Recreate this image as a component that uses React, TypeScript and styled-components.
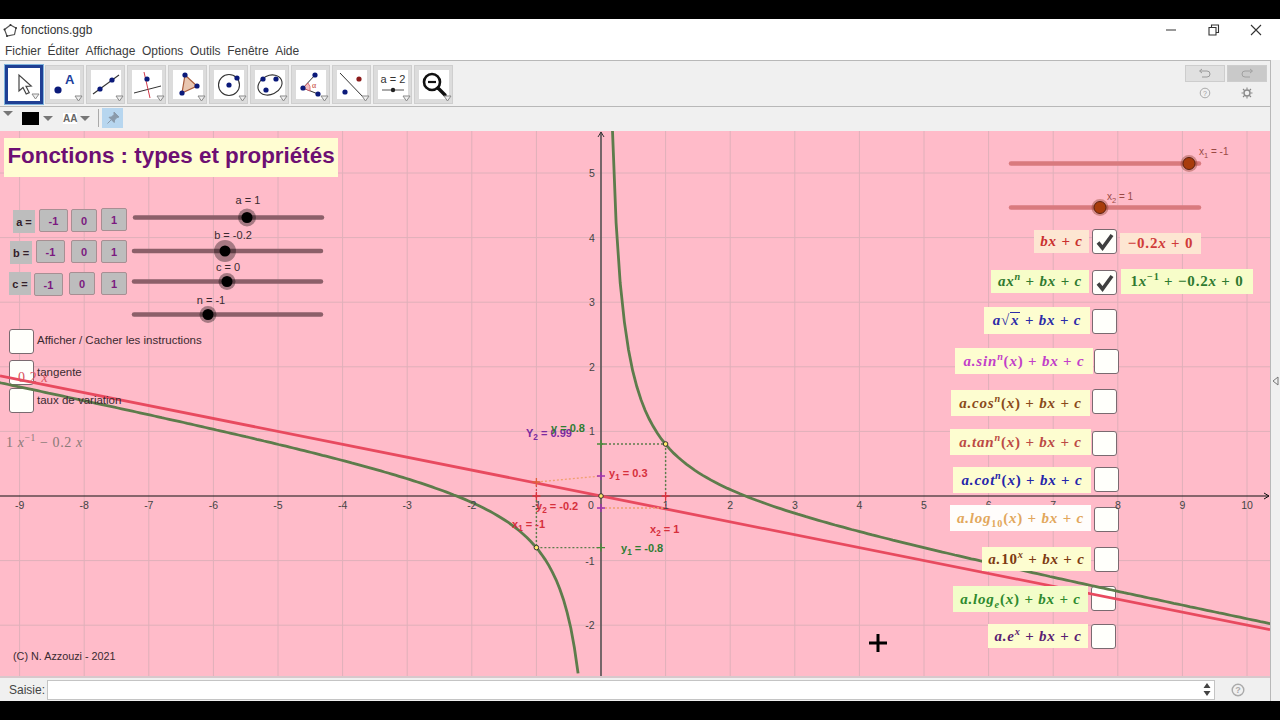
import React from "react";
import styled, { createGlobalStyle } from "styled-components";

const Global = createGlobalStyle`
  html, body { margin: 0; padding: 0; background: #000; }
  #root { width: 1280px; height: 720px; }
`;

const OX = 601;
const OY = 496;
const U = 64.6;
const TOP = 131;
const px = (x: number) => OX + x * U;
const py = (y: number) => OY - y * U;

const Page = styled.div`
  width: 1280px;
  height: 720px;
  overflow: hidden;
  display: flex;
  flex-direction: column;
  background: #000;
  font-family: "Liberation Sans", Arial, sans-serif;
`;
const BlackBar = styled.div`
  height: ${(p: { $h: number }) => p.$h}px;
  flex: none;
  background: #000;
`;
const TitleBar = styled.header`
  height: 22px;
  flex: none;
  background: #fff;
  display: flex;
  align-items: center;
  padding: 0 0 0 3px;
  gap: 3px;
  font-size: 12px;
  color: #333;
`;
const TitleText = styled.span`
  flex: 1;
  font-size: 12px;
`;
const WinButtons = styled.div`
  display: flex;
  align-items: center;
  gap: 28px;
  padding-right: 16px;
`;
const MenuBar = styled.nav`
  height: 19px;
  flex: none;
  background: #fff;
  display: flex;
  align-items: center;
  gap: 6.6px;
  padding-left: 5px;
  font-size: 12px;
  color: #3c3c3c;
`;
const Workspace = styled.div`
  flex: none;
  height: 641px;
  display: flex;
`;
const WorkColumn = styled.div`
  width: 1270px;
  flex: none;
  display: flex;
  flex-direction: column;
`;
const Toolbar = styled.div`
  height: 47px;
  flex: none;
  box-sizing: border-box;
  background: #f0f0f0;
  border-top: 1px solid #b8b8b8;
  border-bottom: 1px solid #b8b8b8;
  display: flex;
  align-items: flex-start;
  padding: 4px 0 0 5px;
  justify-content: space-between;
`;
const ToolGroup = styled.div`
  display: flex;
  gap: 2px;
`;
const ToolButton = styled.div<{ $active?: boolean }>`
  position: relative;
  width: ${(p) => (p.$active ? 38 : 39)}px;
  height: 39px;
  box-sizing: border-box;
  background: ${(p) => (p.$active ? "#fff" : "#dcdcdc")};
  border: ${(p) => (p.$active ? "3px solid #1f3f94" : "1px solid #cfcfcf")};
  outline: ${(p) => (p.$active ? "1px solid #7fb4dc" : "none")};
  display: flex;
  align-items: center;
  justify-content: center;
`;
const ToolFace = styled.div`
  width: 30px;
  height: 29px;
  background: #fff;
  display: flex;
  align-items: center;
  justify-content: center;
`;
const ToolCaret = styled.svg`
  position: absolute;
  right: 0;
  bottom: 1px;
`;
const UndoArea = styled.div`
  display: grid;
  grid-template-columns: 40px 40px;
  column-gap: 2px;
  row-gap: 5px;
  padding-right: 3px;
  justify-items: center;
`;
const UndoButton = styled.div<{ $dark?: boolean }>`
  width: 40px;
  height: 17px;
  box-sizing: border-box;
  background: ${(p) => (p.$dark ? "#c9c9c9" : "#e0e0e0")};
  border: 1px solid #cdcdcd;
  display: flex;
  align-items: center;
  justify-content: center;
`;
const StyleBar = styled.div`
  height: 24px;
  flex: none;
  box-sizing: border-box;
  background: #f0f0f0;
  display: flex;
  align-items: center;
  padding: 0 0 2px 3px;
`;
const Caret = styled.span<{ $ml: number; $up?: number }>`
  width: 0;
  height: 0;
  margin-left: ${(p) => p.$ml}px;
  margin-bottom: ${(p) => p.$up || 0}px;
  border-left: 5px solid transparent;
  border-right: 5px solid transparent;
  border-top: 5px solid #777;
`;
const Swatch = styled.span`
  width: 17px;
  height: 13px;
  margin-left: 9px;
  background: #000;
`;
const FontAA = styled.span`
  margin-left: 10px;
  font-size: 10px;
  font-weight: bold;
  background: #fff;
  color: #666;
  width: 14px;
`;
const Separator = styled.span`
  width: 1px;
  height: 18px;
  margin-left: 8px;
  background: #aaa;
`;
const PinButton = styled.span`
  width: 21px;
  height: 20px;
  margin-left: 3px;
  background: #b7d6ef;
  display: flex;
  align-items: center;
  justify-content: center;
`;
const Canvas = styled.section`
  position: relative;
  flex: none;
  height: 545px;
  background: #ffbbc9;
  overflow: hidden;
`;
const SideStrip = styled.aside`
  flex: 1;
  background: #f0f0f0;
  border-left: 1px solid #b8b8b8;
  display: flex;
  align-items: flex-start;
  padding-top: 316px;
  justify-content: center;
`;
const Plot = styled.svg<{ $z: number }>`
  position: absolute;
  left: 0;
  top: 0;
  z-index: ${(p) => p.$z};
`;
const Title = styled.h1`
  position: absolute;
  z-index: 3;
  left: 4px;
  top: 7px;
  width: 334px;
  height: 39px;
  margin: 0;
  background: #fffdd2;
  color: #6d0f73;
  font-size: 22.4px;
  font-weight: bold;
  line-height: 36px;
  text-align: center;
  white-space: nowrap;
`;
const Txt = styled.span<{ $x: number; $y: number; $c?: string; $s?: number; $b?: boolean; $mid?: boolean }>`
  position: absolute;
  z-index: 3;
  left: ${(p) => p.$x}px;
  top: ${(p) => p.$y - TOP}px;
  transform: translate(${(p) => (p.$mid ? "-50%" : "0")}, -50%);
  color: ${(p) => p.$c || "#3a2a30"};
  font-size: ${(p) => p.$s || 11.5}px;
  font-weight: ${(p) => (p.$b ? "bold" : "normal")};
  white-space: nowrap;
  line-height: 1;
  sub {
    font-size: 0.75em;
    line-height: 0;
  }
`;
const SerifTxt = styled(Txt)`
  font-family: "Liberation Serif", serif;
  font-size: 14px;
  letter-spacing: 0.6px;
  sup {
    font-size: 0.68em;
    line-height: 0;
  }
`;
const Check = styled.div<{ $x: number; $y: number }>`
  position: absolute;
  z-index: 1;
  left: ${(p) => p.$x}px;
  top: ${(p) => p.$y - TOP}px;
  width: 25px;
  height: 25px;
  box-sizing: border-box;
  border: 1.5px solid #7a6a70;
  border-radius: 3px;
  background: #fffffb;
  display: flex;
  align-items: center;
  justify-content: center;
`;
const GrayLabel = styled.div<{ $x: number; $y: number }>`
  position: absolute;
  z-index: 3;
  left: ${(p) => p.$x}px;
  top: ${(p) => p.$y - TOP}px;
  width: 22px;
  height: 23px;
  background: #bdbdbd;
  color: #33202a;
  font-size: 11px;
  font-weight: bold;
  display: flex;
  align-items: center;
  justify-content: center;
`;
const ValueButton = styled.div<{ $x: number; $y: number; $w: number }>`
  position: absolute;
  z-index: 3;
  left: ${(p) => p.$x}px;
  top: ${(p) => p.$y - TOP}px;
  width: ${(p) => p.$w}px;
  height: 23px;
  box-sizing: border-box;
  background: #bdbdbd;
  border: 1px solid #a78f93;
  border-radius: 2px;
  color: #7b1a80;
  font-size: 11px;
  font-weight: bold;
  display: flex;
  align-items: center;
  justify-content: center;
`;
const FormulaBox = styled.div<{ $l: number; $r: number; $t: number; $b: number; $bg: string; $c: string }>`
  position: absolute;
  z-index: 3;
  left: ${(p) => p.$l}px;
  top: ${(p) => p.$t - TOP}px;
  width: ${(p) => p.$r - p.$l}px;
  height: ${(p) => p.$b - p.$t}px;
  background: ${(p) => p.$bg};
  color: ${(p) => p.$c};
  font-family: "Liberation Serif", serif;
  font-weight: bold;
  font-size: 15px;
  letter-spacing: 0.8px;
  display: flex;
  align-items: center;
  justify-content: center;
  white-space: nowrap;
  i {
    font-style: italic;
  }
  sup, sub {
    font-size: 0.68em;
    line-height: 0;
  }
`;
const Radicand = styled.i`
  display: inline-block;
  border-top: 1.2px solid currentColor;
  line-height: 1;
  padding: 0 1px;
`;
const InputBar = styled.footer`
  flex: none;
  height: 25px;
  box-sizing: border-box;
  background: #f0f0f0;
  border-top: 2px solid #d8c8cc;
  display: flex;
  align-items: center;
  padding: 0 0 0 9px;
  font-size: 12px;
  color: #444;
`;
const InputField = styled.div`
  margin-left: 2px;
  width: 1168px;
  height: 20px;
  box-sizing: border-box;
  background: #fff;
  border: 1px solid #c4c4c4;
  display: flex;
  align-items: center;
  justify-content: flex-end;
  padding-right: 3px;
`;
const InputHelp = styled.span`
  margin-left: 16px;
  display: flex;
`;
const Cursor = styled.svg`
  position: absolute;
  z-index: 4;
  left: 868px;
  top: 502px;
`;

const Sq = ({ children }: { children: React.ReactNode }) => (
  <svg width="28" height="27" viewBox="0 0 28 27">{children}</svg>
);
const Dot = ({ x, y, r = 2.6, c = "#0b1a7a" }: { x: number; y: number; r?: number; c?: string }) => (
  <circle cx={x} cy={y} r={r} fill={c} />
);

const toolIcons: React.ReactNode[] = [
  <Sq><path d="M9 4v16l4-3.5 3.2 6.5 3-1.4-3.2-6.3 5.2-.3z" fill="#fff" stroke="#444" strokeWidth="1.2" /></Sq>,
  <Sq><Dot x={7} y={19} r={3.6} /><text x="14" y="13" fontFamily="Liberation Sans" fontWeight="bold" fontSize="13" fill="#1d3f9c">A</text></Sq>,
  <Sq><path d="M1 23L27 4" stroke="#333" strokeWidth="1.1" /><Dot x={8} y={18} /><Dot x={20} y={9} /></Sq>,
  <Sq><path d="M1 22L28 15" stroke="#333" strokeWidth="1" /><path d="M11 1l6 26" stroke="#d0394a" strokeWidth="1" /><Dot x={14} y={8} /></Sq>,
  <Sq><path d="M11 4L23 15 8 22z" fill="#e9c6b0" stroke="#a6593a" strokeWidth="1.2" /><Dot x={11} y={4} /><Dot x={23} y={15} /><Dot x={8} y={22} /></Sq>,
  <Sq><circle cx="14" cy="14" r="10.5" fill="none" stroke="#333" strokeWidth="1.1" /><Dot x={14} y={14} /><Dot x={22} y={7} /></Sq>,
  <Sq><ellipse cx="14" cy="14" rx="12.5" ry="9.5" transform="rotate(-25 14 14)" fill="none" stroke="#333" strokeWidth="1.1" /><Dot x={7} y={8} /><Dot x={20} y={8} /><Dot x={10} y={19} /></Sq>,
  <Sq><path d="M6 17L18 4M6 17L21 23" stroke="#333" strokeWidth="1" /><path d="M11 12q3 3 2 8l-7-3z" fill="#f2c0c0" stroke="#d0394a" strokeWidth=".6" /><text x="15" y="17" fontSize="8" fontFamily="Liberation Serif" fill="#c0392b">α</text><Dot x={6} y={17} /><Dot x={18} y={4} /><Dot x={21} y={23} /></Sq>,
  <Sq><path d="M2 2L26 27" stroke="#333" strokeWidth="1" /><Dot x={21} y={8} c="#8b1a1a" /><Dot x={7} y={21} /></Sq>,
  <Sq><text x="14" y="12" textAnchor="middle" fontFamily="Liberation Sans" fontSize="11" fill="#333">a = 2</text><path d="M3 19H25" stroke="#555" strokeWidth="1" /><circle cx="14" cy="19" r="2.2" fill="#222" /></Sq>,
  <Sq><circle cx="12" cy="11" r="8" fill="#fff" stroke="#111" strokeWidth="2.6" /><path d="M8 11h8" stroke="#111" strokeWidth="2.2" /><path d="M18 17l7 7" stroke="#111" strokeWidth="3.4" strokeLinecap="round" /></Sq>,
];

const curve = (from: number, to: number) => {
  const n = 160;
  const pts: string[] = [];
  for (let i = 0; i <= n; i++) {
    const x = from + ((to - from) * i) / n;
    const y = 1 / x - 0.2 * x;
    pts.push(`${px(x).toFixed(1)},${py(y).toFixed(1)}`);
  }
  return `M${pts.join("L")}`;
};

const xTicks = [-9, -8, -7, -6, -5, -4, -3, -2, -1, 1, 2, 3, 4, 5, 6, 7, 8, 9, 10];
const yTicks = [-2, -1, 1, 2, 3, 4, 5];
const gridX = Array.from({ length: 20 }, (_, i) => i - 9);

const Cross = ({ x, y, c }: { x: number; y: number; c: string }) => (
  <path d={`M${x - 4} ${y}h8M${x} ${y - 4}v8`} stroke={c} strokeWidth="1.3" />
);
const Pt = ({ x, y }: { x: number; y: number }) => (
  <circle cx={x} cy={y} r="2.3" fill="#ffeb6b" stroke="#333" strokeWidth="1" />
);

const GridLayer = () => (
  <Plot $z={0} width="1270" height="545" viewBox={`0 ${TOP} 1270 545`}>
    {gridX.map((g) => (
      <line key={g} x1={px(g)} x2={px(g)} y1={TOP} y2={676} stroke="#dfb0ba" strokeWidth="1" />
    ))}
    {yTicks.map((g) => (
      <line key={g} x1="0" x2="1270" y1={py(g)} y2={py(g)} stroke="#dfb0ba" strokeWidth="1" />
    ))}
    <path d={`M0 ${OY}H1269`} stroke="#111" strokeWidth="1.2" />
    <path d={`M1264 ${OY - 3}l5 3-5 3`} stroke="#111" fill="none" />
    <path d={`M${OX} ${TOP + 1}V676`} stroke="#444" strokeWidth="1.4" />
    <path d={`M${OX - 3} ${TOP + 6}l3-5 3 5`} stroke="#333" fill="none" />
  </Plot>
);

const Graph = () => (
  <Plot $z={2} width="1270" height="545" viewBox={`0 ${TOP} 1270 545`}>
    <path d={curve(0.17, 10.4)} fill="none" stroke="#5d7c4b" strokeWidth="2.8" />
    <path d={curve(-9.4, -0.355)} fill="none" stroke="#5d7c4b" strokeWidth="2.8" />
    <path d={`M0 ${py(1.86)}L1270 ${py(-2.07)}`} stroke="#e84a5f" strokeWidth="2.8" />
    <path d="M665.6 444V496" stroke="#5d7c4b" strokeWidth="1.4" strokeDasharray="2 2" />
    <path d="M601 444H665.6" stroke="#5d7c4b" strokeWidth="1.4" strokeDasharray="2 2" />
    <path d="M536.4 496V547.6" stroke="#5d7c4b" strokeWidth="1.4" strokeDasharray="2 2" />
    <path d="M536.4 547.6H601" stroke="#5d7c4b" strokeWidth="1.4" strokeDasharray="2 2" />
    <path d="M537 482L601 476" stroke="#f0a070" strokeWidth="1.3" strokeDasharray="2 2" />
    <path d="M601 508H665" stroke="#f0a070" strokeWidth="1.3" strokeDasharray="2 2" />
    <path d="M536.4 481V496M665.6 496V508" stroke="#d8404a" strokeWidth="1.2" strokeDasharray="2 2" />
    <Cross x={536.4} y={496} c="#e0303c" />
    <Cross x={536.4} y={482} c="#e0603c" />
    <Cross x={665.6} y={496} c="#e0303c" />
    <Cross x={601} y={476} c="#a030b0" />
    <Cross x={601} y={508} c="#a030b0" />
    <Cross x={601} y={444} c="#4a8a3a" />
    <Cross x={601} y={547.6} c="#4a8a3a" />
    <Pt x={665.6} y={444} />
    <Pt x={536.4} y={547.6} />
    <Pt x={601} y={496} />

    {[
      { x1: 135, x2: 322, y: 217.5, k: 247, h: 9 },
      { x1: 134, x2: 321, y: 251, k: 225, h: 11 },
      { x1: 134, x2: 321, y: 281.5, k: 227, h: 8.5 },
      { x1: 134, x2: 321, y: 314.5, k: 208, h: 8.5 },
    ].map((s) => (
      <g key={s.y}>
        <line x1={s.x1} x2={s.x2} y1={s.y} y2={s.y} stroke="#8c5f69" strokeWidth="4.5" strokeLinecap="round" />
        <circle cx={s.k} cy={s.y} r={s.h} fill="#000" opacity=".35" />
        <circle cx={s.k} cy={s.y} r="5.5" fill="#000" />
      </g>
    ))}
    {[
      { y: 163.5, k: 1189 },
      { y: 207.5, k: 1100 },
    ].map((s) => (
      <g key={s.y}>
        <line x1="1011" x2="1199" y1={s.y} y2={s.y} stroke="#d97a7e" strokeWidth="4.5" strokeLinecap="round" />
        <circle cx={s.k} cy={s.y} r="8.5" fill="#7a2a10" opacity=".35" />
        <circle cx={s.k} cy={s.y} r="6" fill="#a83c0c" stroke="#5a2010" strokeWidth="1" />
      </g>
    ))}
  </Plot>
);

const CheckMark = () => (
  <svg width="20" height="20" viewBox="0 0 20 20">
    <path d="M3 10.5l4.5 5.5L17 3" fill="none" stroke="#3f3f3f" strokeWidth="3.6" />
  </svg>
);

const rowBoxes = [
  { l: 1034, r: 1089, t: 230, b: 253, bg: "#fde6d2", c: "#c9302f", f: <><i>bx</i> + <i>c</i></> },
  { l: 991, r: 1089, t: 270, b: 293, bg: "#f7fdc9", c: "#2f7a30", f: <><i>ax<sup>n</sup></i> + <i>bx</i> + <i>c</i></> },
  { l: 984, r: 1090, t: 307, b: 334, bg: "#fdfdd0", c: "#2c2ca8", f: <><i>a</i>√<Radicand>x</Radicand> + <i>bx</i> + <i>c</i></> },
  { l: 955, r: 1093, t: 348, b: 374, bg: "#fdfdd0", c: "#c23fc9", f: <><i>a.sin<sup>n</sup></i>(<i>x</i>) + <i>bx</i> + <i>c</i></> },
  { l: 951, r: 1090, t: 390, b: 416, bg: "#fdfdd0", c: "#8a4a1a", f: <><i>a.cos<sup>n</sup></i>(<i>x</i>) + <i>bx</i> + <i>c</i></> },
  { l: 950, r: 1091, t: 429, b: 455, bg: "#fdfdd0", c: "#bb4a45", f: <><i>a.tan<sup>n</sup></i>(<i>x</i>) + <i>bx</i> + <i>c</i></> },
  { l: 953, r: 1091, t: 467, b: 493, bg: "#fdfdd0", c: "#2424aa", f: <><i>a.cot<sup>n</sup></i>(<i>x</i>) + <i>bx</i> + <i>c</i></> },
  { l: 950, r: 1091, t: 505, b: 531, bg: "#fffdfb", c: "#e2a75c", f: <><i>a.log</i><sub>10</sub>(<i>x</i>) + <i>bx</i> + <i>c</i></> },
  { l: 982, r: 1091, t: 547, b: 571, bg: "#fdfdd0", c: "#7d3a12", f: <><i>a.</i>10<sup><i>x</i></sup> + <i>bx</i> + <i>c</i></> },
  { l: 953, r: 1088, t: 586, b: 612, bg: "#f2fdc9", c: "#2e8a2e", f: <><i>a.log<sub>e</sub></i>(<i>x</i>) + <i>bx</i> + <i>c</i></> },
  { l: 988, r: 1088, t: 624, b: 648, bg: "#fdfdd0", c: "#5b1c72", f: <><i>a.e<sup>x</sup></i> + <i>bx</i> + <i>c</i></> },
  { l: 1120, r: 1201, t: 233, b: 254, bg: "#fde6d2", c: "#d03c3a", f: <>−0.2<i>x</i> + 0</> },
  { l: 1121, r: 1253, t: 269, b: 294, bg: "#f7fdc9", c: "#2f7a30", f: <>1<i>x</i><sup>−1</sup> + −0.2<i>x</i> + 0</> },
];

const checks = [
  { x: 1092, y: 229, on: true },
  { x: 1092, y: 270, on: true },
  { x: 1092, y: 309 },
  { x: 1094, y: 349 },
  { x: 1092, y: 389 },
  { x: 1092, y: 431 },
  { x: 1094, y: 467 },
  { x: 1094, y: 507 },
  { x: 1094, y: 547 },
  { x: 1091, y: 586 },
  { x: 1091, y: 624 },
  { x: 9, y: 329 },
  { x: 9, y: 360 },
  { x: 9, y: 388 },
];

const paramLabels = [
  { t: "a =", x: 13, y: 210 },
  { t: "b =", x: 10, y: 241 },
  { t: "c =", x: 9, y: 272 },
];
const paramButtons = [
  { t: "-1", x: 39, y: 209, w: 29 },
  { t: "0", x: 71, y: 209, w: 26 },
  { t: "1", x: 101, y: 208, w: 26 },
  { t: "-1", x: 36, y: 240, w: 29 },
  { t: "0", x: 71, y: 240, w: 26 },
  { t: "1", x: 101, y: 240, w: 26 },
  { t: "-1", x: 34, y: 273, w: 29 },
  { t: "0", x: 69, y: 272, w: 26 },
  { t: "1", x: 101, y: 272, w: 26 },
];

export default function App() {
  return (
    <Page>
      <Global />
      <BlackBar $h={19} />
      <TitleBar>
        <svg width="15" height="15" viewBox="0 0 15 15">
          <path d="M7.5 2L13 5l-1.5 6.5L4 13 1.5 6.5z" fill="none" stroke="#555" strokeWidth="1.2" />
          <circle cx="7.5" cy="2" r="1" fill="#333" /><circle cx="13" cy="5" r="1" fill="#333" /><circle cx="4" cy="13" r="1" fill="#333" /><circle cx="1.5" cy="6.5" r="1" fill="#333" />
        </svg>
        <TitleText>fonctions.ggb</TitleText>
        <WinButtons>
          <svg width="15" height="12" viewBox="0 0 15 12"><path d="M3 6h10" stroke="#555" strokeWidth="1.2" /></svg>
          <svg width="15" height="12" viewBox="0 0 15 12"><path d="M3 3.5h7v7.5H3zM5.5 3.5V1h7v7.5H10" fill="none" stroke="#333" strokeWidth="1.1" /></svg>
          <svg width="15" height="12" viewBox="0 0 15 12"><path d="M2 1l10 10M12 1L2 11" stroke="#333" strokeWidth="1.1" /></svg>
        </WinButtons>
      </TitleBar>
      <MenuBar>
        {["Fichier", "Éditer", "Affichage", "Options", "Outils", "Fenêtre", "Aide"].map((m) => (
          <span key={m}>{m}</span>
        ))}
      </MenuBar>
      <Workspace>
        <WorkColumn>
          <Toolbar>
            <ToolGroup>
              {toolIcons.map((ic, i) => (
                <ToolButton key={i} $active={i === 0}>
                  <ToolFace>{ic}</ToolFace>
                  <ToolCaret width="9" height="7" viewBox="0 0 9 7">
                    <path d="M1 1h7L4.5 6z" fill="#eee" stroke="#8a8a8a" strokeWidth="1" />
                  </ToolCaret>
                </ToolButton>
              ))}
            </ToolGroup>
            <UndoArea>
              <UndoButton>
                <svg width="14" height="11" viewBox="0 0 14 11"><path d="M4 1L1.5 3 4 5M2 3h7a3 3 0 010 6H4" fill="none" stroke="#9a9a9a" strokeWidth="1" /></svg>
              </UndoButton>
              <UndoButton $dark>
                <svg width="14" height="11" viewBox="0 0 14 11"><path d="M10 1l2.5 2L10 5M12 3H5a3 3 0 000 6h5" fill="none" stroke="#a0a0a0" strokeWidth="1" /></svg>
              </UndoButton>
              <svg width="12" height="12" viewBox="0 0 12 12"><circle cx="6" cy="6" r="4.8" fill="none" stroke="#aaa" /><text x="6" y="8.5" textAnchor="middle" fontSize="7" fill="#999" fontFamily="Liberation Sans">?</text></svg>
              <svg width="12" height="12" viewBox="0 0 12 12"><circle cx="6" cy="6" r="3" fill="none" stroke="#888" strokeWidth="1.4" /><path d="M6 .5v2M6 9.5v2M.5 6h2M9.5 6h2M2 2l1.5 1.5M8.5 8.5L10 10M10 2L8.5 3.5M3.5 8.5L2 10" stroke="#888" strokeWidth="1.1" /></svg>
            </UndoArea>
          </Toolbar>
          <StyleBar>
            <Caret $ml={0} $up={9} />
            <Swatch />
            <Caret $ml={4} />
            <FontAA>AA</FontAA>
            <Caret $ml={3} />
            <Separator />
            <PinButton>
              <svg width="14" height="14" viewBox="0 0 14 14"><path d="M8 1l5 5-2 .5-2.5 2.5-.3 2.5L3 6.3l2.5-.3L8 3.5zM5 9l-3.5 3.5" fill="#8a9aaa" stroke="#8a9aaa" /></svg>
            </PinButton>
          </StyleBar>
          <Canvas>
            <GridLayer />
            <Title>Fonctions : types et propriétés</Title>
            {checks.map((c) => (
              <Check key={`${c.x}-${c.y}`} $x={c.x} $y={c.y}>
                {c.on && <CheckMark />}
              </Check>
            ))}
            <Graph />
            {xTicks.map((t) => (
              <Txt key={t} $x={px(t)} $y={505} $s={10.5} $c="#444" $mid>{t}</Txt>
            ))}
            <Txt $x={591} $y={505} $s={10.5} $c="#444" $mid>0</Txt>
            {yTicks.map((t) => (
              <Txt key={t} $x={t < 0 ? 590 : 592} $y={py(t)} $s={10.5} $c="#444" $mid>{t}</Txt>
            ))}
            {paramLabels.map((p) => (
              <GrayLabel key={p.t} $x={p.x} $y={p.y}>{p.t}</GrayLabel>
            ))}
            {paramButtons.map((b) => (
              <ValueButton key={`${b.x}-${b.y}`} $x={b.x} $y={b.y} $w={b.w}>{b.t}</ValueButton>
            ))}
            <Txt $x={248} $y={200} $s={11} $mid>a = 1</Txt>
            <Txt $x={233} $y={235} $s={11} $mid>b = -0.2</Txt>
            <Txt $x={228} $y={267} $s={11} $mid>c = 0</Txt>
            <Txt $x={211} $y={300} $s={11} $mid>n = -1</Txt>
            <Txt $x={37} $y={341}>Afficher / Cacher les instructions</Txt>
            <Txt $x={37} $y={373}>tangente</Txt>
            <Txt $x={37} $y={401}>taux de variation</Txt>
            <SerifTxt $x={18} $y={378} $c="#d9525f">0.2 <i>x</i></SerifTxt>
            <SerifTxt $x={6} $y={443} $c="#8a7a78">1 <i>x</i><sup>−1</sup> − 0.2 <i>x</i></SerifTxt>
            <Txt $x={13} $y={656} $s={10.8}>(C) N. Azzouzi - 2021</Txt>
            <Txt $x={1199} $y={152} $s={10} $c="#9a4a45">x<sub>1</sub> = -1</Txt>
            <Txt $x={1107} $y={197} $s={10} $c="#9a4a45">x<sub>2</sub> = 1</Txt>
            <Txt $x={526} $y={433} $s={11} $b $c="#7a2aa0">Y<sub>2</sub> = 0.99</Txt>
            <Txt $x={551} $y={428} $s={11} $b $c="#2e7d32">y = 0.8</Txt>
            <Txt $x={609} $y={473} $s={11} $b $c="#d6303c">y<sub>1</sub> = 0.3</Txt>
            <Txt $x={536} $y={506} $s={11} $b $c="#d6303c">y<sub>2</sub> = -0.2</Txt>
            <Txt $x={512} $y={524} $s={11} $b $c="#d6303c">x<sub>1</sub> = -1</Txt>
            <Txt $x={650} $y={529} $s={11} $b $c="#d6303c">x<sub>2</sub> = 1</Txt>
            <Txt $x={621} $y={548} $s={11} $b $c="#2e7d32">y<sub>1</sub> = -0.8</Txt>
            {rowBoxes.map((b) => (
              <FormulaBox key={`${b.l}-${b.t}`} $l={b.l} $r={b.r} $t={b.t} $b={b.b} $bg={b.bg} $c={b.c}>
                <span>{b.f}</span>
              </FormulaBox>
            ))}
            <Cursor width="20" height="20" viewBox="0 0 20 20">
              <path d="M10 1v18M1 10h18" stroke="#000" strokeWidth="3" />
            </Cursor>
          </Canvas>
          <InputBar>
            Saisie:
            <InputField>
              <svg width="8" height="13" viewBox="0 0 8 13"><path d="M4 0l3.5 5H.5zM4 13L.5 8h7z" fill="#444" /></svg>
            </InputField>
            <InputHelp>
              <svg width="14" height="14" viewBox="0 0 14 14"><circle cx="7" cy="7" r="5.8" fill="none" stroke="#aaa" strokeWidth="1.4" /><text x="7" y="10.3" textAnchor="middle" fontSize="9" fontWeight="bold" fill="#aaa" fontFamily="Liberation Sans">?</text></svg>
            </InputHelp>
          </InputBar>
        </WorkColumn>
        <SideStrip>
          <svg width="7" height="10" viewBox="0 0 7 10"><path d="M6 1L1 5l5 4z" fill="none" stroke="#777" /></svg>
        </SideStrip>
      </Workspace>
      <BlackBar $h={19} />
    </Page>
  );
}
